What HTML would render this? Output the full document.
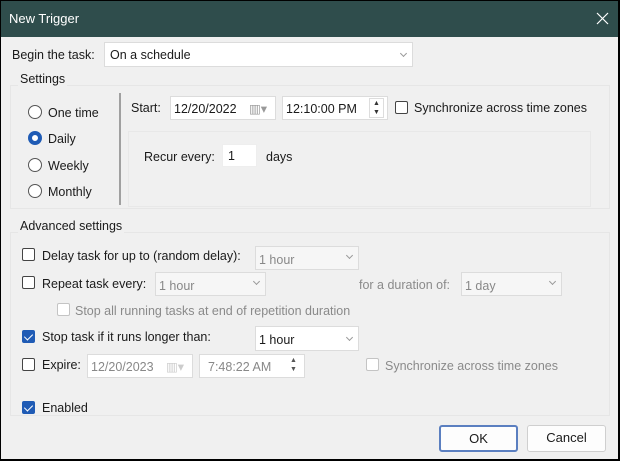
<!DOCTYPE html><html><head><style>
*{box-sizing:border-box;margin:0;padding:0}
body{width:620px;height:461px;background:#000;font-family:"Liberation Sans",sans-serif;font-size:12.5px;color:#1a1a1a;position:relative;overflow:hidden}
.win{position:absolute;left:1px;top:1px;width:617px;height:458px;background:#f0f0f0}
.title{position:absolute;left:0;top:0;width:617px;height:36px;background:#2f4d4c;color:#fff;font-size:13px}
.a{position:absolute;white-space:nowrap}
.box{position:absolute;background:#fff;border:1px solid #dcdcdc}
.dis{background:#f6f6f6;color:#888}
.grp{position:absolute;border:1px solid #e6e6e6}
.rad{position:absolute;width:14px;height:14px;border:1px solid #555;border-radius:50%;background:#fff}
.cb{position:absolute;width:13px;height:13px;border:1px solid #444;border-radius:2px;background:#fff}
.cb.on{background:#1f5bb5;border-color:#1f5bb5}
.cb.on:after{content:"";position:absolute;left:3px;top:1px;width:4px;height:7px;border:solid #fff;border-width:0 1.5px 1.5px 0;transform:rotate(45deg)}
.cb.d{border-color:#c4c4c4}
.chev{position:absolute;right:6px;top:6px;width:5px;height:5px;border:solid #999;border-width:0 1px 1px 0;transform:rotate(45deg)}
.g{color:#8a8a8a}
.btn{position:absolute;background:#fdfdfd;border:1px solid #cfcfcf;border-radius:3px;text-align:center;line-height:24px;font-size:13px}
</style></head><body><div class="win">
<div class="title"><span class="a" style="left:8px;top:10px">New Trigger</span>
<svg class="a" style="left:595px;top:11px" width="13" height="13" viewBox="0 0 13 13"><path d="M1 1L12 12M12 1L1 12" stroke="#fff" stroke-width="1.2"/></svg></div>
<span class="a" style="left:11px;top:47px">Begin the task:</span>
<div class="box" style="left:103px;top:41px;width:309px;height:25px"><span class="a" style="left:5px;top:5px">On a schedule</span><div class="chev" style="top:8px"></div></div>
<div class="grp" style="left:9px;top:84px;width:600px;height:124px"></div>
<span class="a" style="left:17px;top:71px;background:#f0f0f0;padding:0 2px">Settings</span>
<div class="rad" style="left:27px;top:104px"></div><span class="a" style="left:47px;top:105px">One time</span>
<div class="rad" style="left:27px;top:130px;border:4px solid #1f5bb5"></div><span class="a" style="left:47px;top:131px">Daily</span>
<div class="rad" style="left:27px;top:157px"></div><span class="a" style="left:47px;top:158px">Weekly</span>
<div class="rad" style="left:27px;top:183px"></div><span class="a" style="left:47px;top:184px">Monthly</span>
<div class="a" style="left:118px;top:92px;width:2px;height:112px;background:#a0a0a0"></div>
<span class="a" style="left:130px;top:100px">Start:</span>
<div class="box" style="left:169px;top:95px;width:106px;height:24px"><span class="a" style="left:3px;top:5px">12/20/2022</span><span class="a" style="left:78px;top:4px;color:#999">▥▾</span></div>
<div class="box" style="left:281px;top:95px;width:106px;height:24px"><span class="a" style="left:3px;top:5px">12:10:00 PM</span><div class="a" style="left:86px;top:1px;width:15px;height:20px;border:1px solid #ddd;font-size:7px;text-align:center;line-height:9px;color:#333">▲<br>▼</div></div>
<div class="cb" style="left:394px;top:100px"></div><span class="a" style="left:413px;top:100px">Synchronize across time zones</span>
<div class="grp" style="left:127px;top:130px;width:463px;height:76px;border-color:#e8e8e8"></div>
<span class="a" style="left:143px;top:149px">Recur every:</span>
<div class="box" style="left:221px;top:143px;width:35px;height:23px;border-color:#eee"><span class="a" style="left:5px;top:4px">1</span></div>
<span class="a" style="left:265px;top:149px">days</span>
<div class="grp" style="left:9px;top:231px;width:600px;height:184px"></div>
<span class="a" style="left:17px;top:218px;background:#f0f0f0;padding:0 2px">Advanced settings</span>
<div class="cb" style="left:21px;top:247px"></div><span class="a" style="left:41px;top:248px">Delay task for up to (random delay):</span>
<div class="box dis" style="left:254px;top:245px;width:104px;height:24px"><span class="a" style="left:3px;top:6px">1 hour</span><div class="chev"></div></div>
<div class="cb" style="left:21px;top:275px"></div><span class="a" style="left:41px;top:276px">Repeat task every:</span>
<div class="box dis" style="left:154px;top:271px;width:111px;height:24px"><span class="a" style="left:3px;top:6px">1 hour</span><div class="chev"></div></div>
<span class="a g" style="left:358px;top:277px">for a duration of:</span>
<div class="box dis" style="left:460px;top:271px;width:101px;height:24px"><span class="a" style="left:3px;top:6px">1 day</span><div class="chev"></div></div>
<div class="cb d" style="left:56px;top:302px"></div><span class="a g" style="left:74px;top:303px">Stop all running tasks at end of repetition duration</span>
<div class="cb on" style="left:21px;top:329px"></div><span class="a" style="left:41px;top:329px">Stop task if it runs longer than:</span>
<div class="box" style="left:254px;top:325px;width:104px;height:25px"><span class="a" style="left:3px;top:6px">1 hour</span><div class="chev" style="top:8px"></div></div>
<div class="cb" style="left:21px;top:357px"></div><span class="a" style="left:41px;top:357px">Expire:</span>
<div class="box dis" style="left:86px;top:353px;width:106px;height:24px;background:#fff"><span class="a" style="left:3px;top:5px">12/20/2023</span><span class="a" style="left:78px;top:4px;color:#ccc">▥▾</span></div>
<div class="box dis" style="left:198px;top:353px;width:106px;height:24px;background:#fff"><span class="a" style="left:8px;top:5px">7:48:22 AM</span><div class="a" style="left:86px;top:1px;width:15px;height:20px;font-size:7px;text-align:center;line-height:9px;color:#555">▲<br>▼</div></div>
<div class="cb d" style="left:365px;top:357px"></div><span class="a g" style="left:384px;top:358px">Synchronize across time zones</span>
<div class="cb on" style="left:21px;top:400px"></div><span class="a" style="left:41px;top:400px">Enabled</span>
<div class="btn" style="left:438px;top:424px;width:79px;height:27px;border:2px solid #5b7fc0">OK</div>
<div class="btn" style="left:526px;top:424px;width:79px;height:27px">Cancel</div>
</div></body></html>
